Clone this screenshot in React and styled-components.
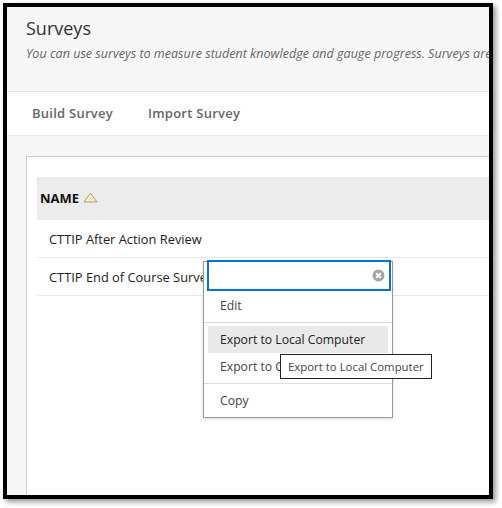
import React from 'react'
import styled, { createGlobalStyle } from 'styled-components'

const GlobalStyle = createGlobalStyle`
  html, body { margin: 0; padding: 0; background: #fff; }
  body { font-family: "Open Sans", sans-serif; }
`

const Screen = styled.div`
  width: 502px;
  height: 508px;
  padding: 3px 9px 9px 3px;
  box-sizing: border-box;
`
const Frame = styled.div`
  position: relative;
  width: 490px;
  height: 496px;
  box-sizing: border-box;
  border: 4px solid #000;
  box-shadow: 3px 3px 5px rgba(0, 0, 0, 0.4);
  background: #f7f7f7;
  overflow: hidden;
`
const Header = styled.header`
  height: 84px;
  box-sizing: border-box;
  padding: 9px 0 0 19px;
  white-space: nowrap;
  overflow: hidden;
`
const Title = styled.h1`
  margin: 0;
  font-size: 18px;
  line-height: 24px;
  font-weight: 400;
  color: #333;
`
const Subtitle = styled.p`
  margin: 5px 0 0;
  font-size: 12.55px;
  line-height: 18px;
  font-style: italic;
  color: #666;
`
const Toolbar = styled.nav`
  height: 45px;
  box-sizing: border-box;
  background: #fff;
  border-top: 1px solid #e8e8e8;
  border-bottom: 1px solid #e8e8e8;
  padding: 0 0 2px 25px;
  display: flex;
  align-items: center;
  gap: 35px;
`
const ToolButton = styled.span`
  font-size: 13px;
  font-weight: 600;
  letter-spacing: 0.25px;
  color: #666;
`
const Panel = styled.section`
  margin: 20px 0 0 19px;
  height: 340px;
  background: #fff;
  border-top: 1px solid #ccc;
  border-left: 1px solid #ccc;
  padding: 20px 0 0 10px;
`
const TableHead = styled.div`
  height: 43px;
  box-sizing: border-box;
  padding: 0 0 2px 3px;
  background: #ececec;
  display: flex;
  align-items: center;
  gap: 4px;
  font-size: 13px;
  font-weight: 700;
  color: #111;
`
const Row = styled.div`
  height: 38px;
  box-sizing: border-box;
  border-bottom: 1px solid #e8e8e8;
  display: flex;
  align-items: center;
  padding-left: 12px;
  font-size: 12.85px;
  color: #222;
`
const Menu = styled.div`
  position: absolute;
  left: 196px;
  top: 254px;
  width: 190px;
  height: 157px;
  box-sizing: border-box;
  background: #fff;
  border: 1px solid #999;
  box-shadow: 0 1px 3px rgba(0, 0, 0, 0.15);
`
const SearchBox = styled.div`
  margin: -2px 0 1px 3px;
  width: 184px;
  height: 31px;
  box-sizing: border-box;
  border: 2px solid #0a72c9;
  background: #fff;
  display: flex;
  align-items: center;
  justify-content: flex-end;
  padding-right: 4px;
`
const MenuGroup = styled.div`
  padding: ${p => p.$padding};
  border-bottom: ${p => (p.$last ? 'none' : '1px solid #ddd')};
`
const MenuItem = styled.div`
  height: 27px;
  margin: 0 4px;
  padding-left: 12px;
  display: flex;
  align-items: center;
  font-size: 12.2px;
  white-space: nowrap;
  overflow: hidden;
  color: ${p => (p.$active ? '#222' : '#444')};
  background: ${p => (p.$active ? '#e9e9e9' : 'transparent')};
`
const Tooltip = styled.div`
  position: absolute;
  left: 273px;
  top: 347px;
  height: 25px;
  box-sizing: border-box;
  padding: 0 7px;
  display: flex;
  align-items: center;
  background: #fff;
  border: 1px solid #222;
  font-size: 11.4px;
  color: #444;
  white-space: nowrap;
`

const SortArrow = () => (
  <svg width="15" height="11" viewBox="0 0 15 11">
    <path d="M7.5 1 L14 10 H1 Z" fill="#f9ebc4" stroke="#a8a08c" strokeWidth="1" strokeLinejoin="round" />
  </svg>
)

const ClearIcon = () => (
  <svg width="13" height="13" viewBox="0 0 13 13">
    <circle cx="6.5" cy="6.5" r="6" fill="#a6a6a6" />
    <path d="M4.2 4.2 L8.8 8.8 M8.8 4.2 L4.2 8.8" stroke="#fff" strokeWidth="2" />
  </svg>
)

const App = () => (
  <Screen>
    <GlobalStyle />
    <Frame>
      <Header>
        <Title>Surveys</Title>
        <Subtitle>You can use surveys to measure student knowledge and gauge progress. Surveys are not graded</Subtitle>
      </Header>
      <Toolbar>
        <ToolButton>Build Survey</ToolButton>
        <ToolButton>Import Survey</ToolButton>
      </Toolbar>
      <Panel>
        <TableHead>NAME <SortArrow /></TableHead>
        <Row>CTTIP After Action Review</Row>
        <Row>CTTIP End of Course Survey</Row>
      </Panel>
      <Menu>
        <SearchBox><ClearIcon /></SearchBox>
        <MenuGroup $padding="0 0 3px"><MenuItem>Edit</MenuItem></MenuGroup>
        <MenuGroup $padding="3px 0 3px">
          <MenuItem $active>Export to Local Computer</MenuItem>
          <MenuItem>Export to Content Collection</MenuItem>
        </MenuGroup>
        <MenuGroup $padding="3px 0 0" $last><MenuItem>Copy</MenuItem></MenuGroup>
      </Menu>
      <Tooltip>Export to Local Computer</Tooltip>
    </Frame>
  </Screen>
)

export default App
